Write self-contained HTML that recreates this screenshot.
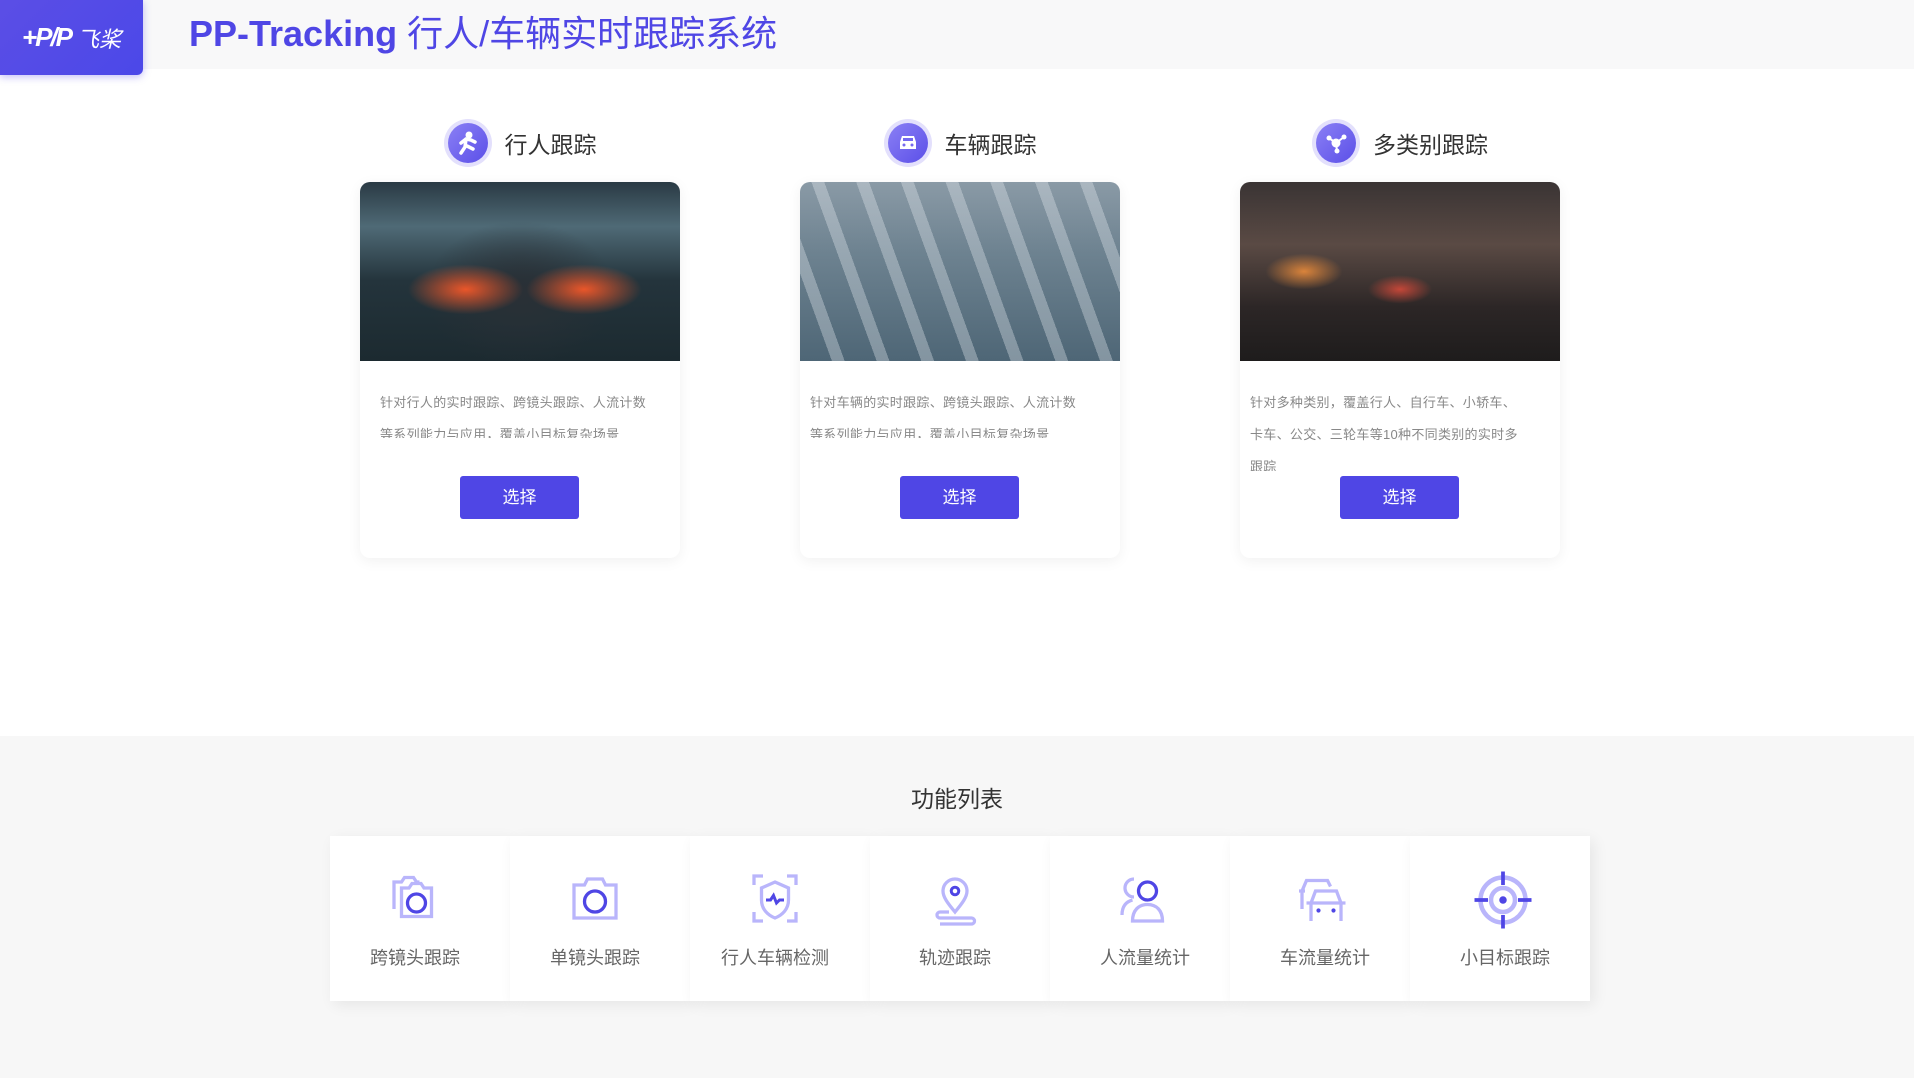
<!DOCTYPE html>
<html><head><meta charset="utf-8"><style>
*{margin:0;padding:0;box-sizing:border-box}
body{width:1914px;height:1078px;overflow:hidden;background:#fff;font-family:"Liberation Sans","Noto Sans CJK SC",sans-serif;position:relative}
.hdr{position:absolute;left:0;top:0;width:1914px;height:69px;background:#f8f8f9}
.logo{position:absolute;left:0;top:0;width:143px;height:75px;background:linear-gradient(135deg,#5b4ee6,#4b48e8);border-radius:0 0 6px 0;box-shadow:0 2px 8px rgba(80,70,230,.35);color:#fff;font-size:26px;font-style:italic;display:flex;align-items:center;justify-content:center;gap:6px}
.title{position:absolute;left:189px;top:12px;font-size:36px;color:#4f46e5;line-height:44px}
.title b{font-weight:bold}
.col{position:absolute;top:118px;width:320px}
.head{height:50px;display:flex;align-items:center;justify-content:center;gap:13px;font-size:23px;color:#333}
.ic{width:48px;height:48px;border-radius:50%;background:#e3e0fc;display:flex;align-items:center;justify-content:center}
.ic div{width:40px;height:40px;border-radius:50%;background:linear-gradient(135deg,#8b80f5,#5b4fe8);display:flex;align-items:center;justify-content:center}
.card{position:absolute;top:64px;left:0;width:320px;height:376px;background:#fff;border-radius:10px;box-shadow:0 3px 14px rgba(0,0,0,.06);overflow:hidden}
.img{height:179px}
.txt{padding:26px 20px 0;font-size:13px;color:#888;line-height:32px;height:77px;overflow:hidden;letter-spacing:.3px}
.btn{position:absolute;left:100px;top:294px;width:119px;height:43px;background:#4f46e5;color:#fff;border-radius:3px;font-size:17px;text-align:center;line-height:43px}
.sec{position:absolute;left:0;top:736px;width:1914px;height:342px;background:#f7f7f7}
.st{position:absolute;top:780px;left:0;width:1914px;text-align:center;font-size:23px;color:#333}
.items{position:absolute;left:330px;top:836px;display:flex;height:165px}
.it{width:180px;height:165px;background:#fff;box-shadow:4px 4px 14px rgba(0,0,0,.07);position:relative}
.it svg{position:absolute;left:55px;top:34px}
.it span{position:absolute;top:108px;left:-5px;width:180px;text-align:center;font-size:18px;color:#666}
.r svg{left:63px}.r span{left:5px}
</style></head><body>
<div class="hdr"></div>
<div class="logo"><span style="font-weight:bold;letter-spacing:-2px">+P/P</span><span style="font-size:22px">飞桨</span></div>
<div class="title"><b>PP-Tracking</b> 行人/车辆实时跟踪系统</div>

<div class="col" style="left:360px">
 <div class="head"><div class="ic"><div><svg width="26" height="26" viewBox="0 0 26 26"><circle cx="14" cy="5" r="3.5" fill="#fff"/><path d="M6 13l5-4 5 1 4 2M11 9l-1 8-4 6M12 16l6 3" stroke="#fff" stroke-width="3.5" fill="none" stroke-linecap="round"/></svg></div></div>行人跟踪</div>
 <div class="card"><div class="img" style="background:radial-gradient(ellipse 18% 14% at 33% 60%,rgba(255,90,40,.9),transparent),radial-gradient(ellipse 18% 14% at 70% 60%,rgba(255,90,40,.9),transparent),radial-gradient(ellipse 30% 40% at 50% 62%,#2a3036,transparent),linear-gradient(180deg,#2a3a44 0%,#4f6a76 25%,#24343c 55%,#1c2a30 100%)"></div>
 <div class="txt">针对行人的实时跟踪、跨镜头跟踪、人流计数<br>等系列能力与应用，覆盖小目标复杂场景</div>
 <div class="btn">选择</div></div>
</div>

<div class="col" style="left:800px">
 <div class="head"><div class="ic"><div><svg width="24" height="24" viewBox="0 0 24 24"><path d="M4 11l2-6h12l2 6v7H4z" fill="#fff"/><circle cx="8" cy="14" r="1.5" fill="#7468ef"/><circle cx="16" cy="14" r="1.5" fill="#7468ef"/><rect x="7" y="7" width="10" height="3" fill="#7468ef"/></svg></div></div>车辆跟踪</div>
 <div class="card"><div class="img" style="background:repeating-linear-gradient(70deg,transparent 0 30px,rgba(230,235,240,.35) 30px 42px),linear-gradient(180deg,#8a9aa6 0%,#6d8290 40%,#4e6676 100%)"></div>
 <div class="txt" style="padding-left:10px">针对车辆的实时跟踪、跨镜头跟踪、人流计数<br>等系列能力与应用，覆盖小目标复杂场景</div>
 <div class="btn">选择</div></div>
</div>

<div class="col" style="left:1240px">
 <div class="head"><div class="ic"><div><svg width="26" height="26" viewBox="0 0 26 26"><path d="M13 13L6 8M13 13l8-6M13 13l1 8" stroke="#fff" stroke-width="2"/><circle cx="13" cy="13" r="4.5" fill="#fff"/><circle cx="6" cy="8" r="2.5" fill="#fff"/><circle cx="21" cy="7" r="2.5" fill="#fff"/><circle cx="14" cy="21" r="2.5" fill="#fff"/></svg></div></div>多类别跟踪</div>
 <div class="card"><div class="img" style="background:radial-gradient(ellipse 12% 10% at 20% 50%,rgba(255,150,60,.8),transparent),radial-gradient(ellipse 10% 8% at 50% 60%,rgba(255,80,60,.7),transparent),linear-gradient(180deg,#3a3434 0%,#5a4a44 35%,#2c2626 70%,#1e1c1c 100%)"></div>
 <div class="txt" style="padding-left:10px;height:110px">针对多种类别，覆盖行人、自行车、小轿车、<br>卡车、公交、三轮车等10种不同类别的实时多<br>跟踪</div>
 <div class="btn">选择</div></div>
</div>

<div class="sec"></div>
<div class="st">功能列表</div>
<div class="items">
 <div class="it"><svg width="60" height="60" viewBox="4 4 40 40"><path d="M10 30V12h5l2-3h6l2 3h2" stroke="#b9b5fb" stroke-width="2.2" fill="none"/><path d="M15 16h5l2-3h6l2 3h5v19H15z" stroke="#b9b5fb" stroke-width="2.2" fill="#fff"/><circle cx="25" cy="26" r="6" stroke="#4f46e5" stroke-width="2.2" fill="none"/></svg><span>跨镜头跟踪</span></div>
 <div class="it"><svg width="60" height="60" viewBox="4 4 40 40"><path d="M10 14h7l2-4h10l2 4h7v22H10z" stroke="#b9b5fb" stroke-width="2.2" fill="none"/><circle cx="24" cy="25" r="7" stroke="#4f46e5" stroke-width="2.2" fill="none"/></svg><span>单镜头跟踪</span></div>
 <div class="it"><svg width="60" height="60" viewBox="4 4 40 40"><path d="M10 14V8h6M32 8h6v6M38 32v6h-6M16 38h-6v-6" stroke="#b9b5fb" stroke-width="2.2" fill="none"/><path d="M24 12l9 4v8c0 6-4 10-9 12-5-2-9-6-9-12v-8z" stroke="#b9b5fb" stroke-width="2.2" fill="none"/><path d="M18 24h3l2-3 2 5 2-2h3" stroke="#4f46e5" stroke-width="2" fill="none"/></svg><span>行人车辆检测</span></div>
 <div class="it"><svg width="60" height="60" viewBox="4 4 40 40"><path d="M24 32c-5-6-8-10-8-14a8 8 0 0116 0c0 4-3 8-8 14z" stroke="#b9b5fb" stroke-width="2.2" fill="none"/><circle cx="24" cy="18" r="2.5" stroke="#4f46e5" stroke-width="2" fill="none"/><path d="M20 32h-6a2 2 0 000 4h21a2 2 0 010 4H14" stroke="#b9b5fb" stroke-width="2.2" fill="none"/></svg><span>轨迹跟踪</span></div>
 <div class="it r"><svg width="60" height="60" viewBox="4 4 40 40"><path d="M18 22a6 6 0 110-12M10 34c0-6 3-9 7-10" stroke="#b9b5fb" stroke-width="2.2" fill="none"/><path d="M17 38c0-7 4-11 10-11s10 4 10 11z" stroke="#b9b5fb" stroke-width="2.2" fill="none"/><circle cx="27" cy="18" r="6" stroke="#4f46e5" stroke-width="2.2" fill="none"/></svg><span>人流量统计</span></div>
 <div class="it r"><svg width="60" height="60" viewBox="4 4 40 40"><path d="M10 30V18l3-7h14l2 4M8 18h4" stroke="#b9b5fb" stroke-width="2.2" fill="none"/><path d="M16 38V26l3-8h14l3 8v12M13 26h26" stroke="#b9b5fb" stroke-width="2.2" fill="none"/><circle cx="21" cy="31" r="1.4" fill="#4f46e5"/><circle cx="31" cy="31" r="1.4" fill="#4f46e5"/></svg><span>车流量统计</span></div>
 <div class="it r"><svg width="60" height="60" viewBox="4 4 40 40"><circle cx="24" cy="24" r="15" stroke="#b9b5fb" stroke-width="3" fill="none"/><circle cx="24" cy="24" r="8" stroke="#b9b5fb" stroke-width="3" fill="none"/><circle cx="24" cy="24" r="2.5" fill="#4f46e5"/><path d="M24 5v9M24 34v9M5 24h9M34 24h9" stroke="#4f46e5" stroke-width="2.5"/></svg><span>小目标跟踪</span></div>
</div>
</body></html>
